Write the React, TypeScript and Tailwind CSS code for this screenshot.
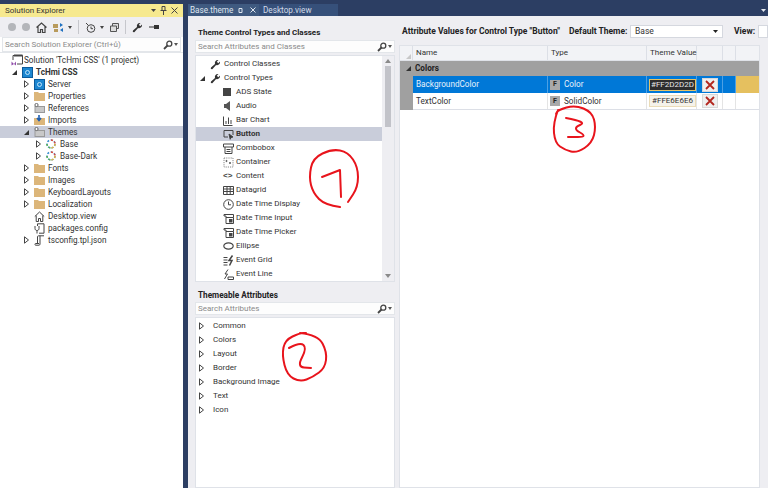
import React from "react";

const F = "font-['Roboto',sans-serif]";

const Tri = ({ open }: { open?: boolean }) =>
  open ? (
    <svg width="7" height="7" viewBox="0 0 7 7" className="shrink-0"><path d="M6 1v5H1z" fill="#333" /></svg>
  ) : (
    <svg width="7" height="8" viewBox="0 0 7 8" className="shrink-0"><path d="M1.5 .8 5.5 4 1.5 7.2z" fill="#fff" stroke="#444" strokeWidth="1" /></svg>
  );

const Folder = () => (
  <svg width="11" height="10" viewBox="0 0 11 10"><path d="M0 1h4l1 1h6v8H0z" fill="#dcb67a" /></svg>
);
const Refs = () => (
  <svg width="11" height="10" viewBox="0 0 11 10"><rect x="1" y="3.5" width="9.5" height="6" fill="#c8c8c8" stroke="#999" /><circle cx="2.5" cy="2" r="1.6" fill="#fff" stroke="#666" /></svg>
);
const Swirl = () => (
  <svg width="10" height="10" viewBox="0 0 10 10" fill="none" strokeWidth="1.5" strokeDasharray="2 1.6">
    <circle cx="5" cy="5" r="4" stroke="#3a8fd0" />
    <path d="M5 1a4 4 0 0 1 4 4" stroke="#e04a3a" />
    <path d="M1 5a4 4 0 0 0 4 4" stroke="#5aae4a" />
    <path d="M9 5a4 4 0 0 1-4 4" stroke="#e5b53a" />
  </svg>
);
const Proj = () => (
  <div className="w-[11px] h-[11px] bg-[#1c86d0] border border-[#0c5a9a] flex items-center justify-center">
    <div className="w-[5px] h-[5px] rounded-full border border-[#bfe3fa]" />
  </div>
);
const Imports = () => (
  <svg width="11" height="10" viewBox="0 0 11 10"><path d="M0 3h11v7H0z" fill="#dcb67a" /><path d="M5 0v5M3 3l2 2.5L7 3" stroke="#1f5fb0" strokeWidth="1.6" fill="none" /></svg>
);
const House = () => (
  <svg width="11" height="11" viewBox="0 0 11 11" fill="none" stroke="#444"><path d="M.8 5.5 5.5 1l4.7 4.5M2.2 4.5v6h2.3V7.5h2v3h2.3v-6" /></svg>
);
const Pkg = () => (
  <svg width="11" height="11" viewBox="0 0 11 11" fill="none" stroke="#444"><path d="M3.5 3V.8h6.5v9.4H5" /><path d="M1 3v2.5c0 1.4 1 2 2 2s2-.6 2-2V3M3 7.5v3" /></svg>
);
const Ts = () => (
  <svg width="11" height="11" viewBox="0 0 11 11" fill="none" stroke="#444"><path d="M3.5 8V1.8c0-.6.4-1 1-1H10M6 .8v8.4c0 .6-.5 1-1 1H1.5C.8 10.2.8 8.5 1.5 8.5H5" /></svg>
);
const Sol = () => (
  <svg width="12" height="12" viewBox="0 0 12 12"><path d="M2 6V1.5h9.5V10H6" fill="#fff" stroke="#444" /><path d="M3 1.5h8.5" stroke="#444" strokeWidth="2" /><path d="M.5 7.5 3 10l2-2.5v4L3 10 .5 11.5z" fill="#8e4ba8" /></svg>
);

type Row = { label: string; indent: number; arrow?: "open" | "closed"; icon: React.ReactNode; bold?: boolean; sel?: boolean; root?: boolean };
const tree: Row[] = [
  { label: "Solution 'TcHmi CSS' (1 project)", indent: 11, icon: <Sol />, root: true },
  { label: "TcHmi CSS", indent: 11, arrow: "open", icon: <Proj />, bold: true },
  { label: "Server", indent: 23, arrow: "closed", icon: <Proj /> },
  { label: "Properties", indent: 23, arrow: "closed", icon: <Folder /> },
  { label: "References", indent: 23, arrow: "closed", icon: <Refs /> },
  { label: "Imports", indent: 23, arrow: "closed", icon: <Imports /> },
  { label: "Themes", indent: 23, arrow: "open", icon: <Refs />, sel: true },
  { label: "Base", indent: 35, arrow: "closed", icon: <Swirl /> },
  { label: "Base-Dark", indent: 35, arrow: "closed", icon: <Swirl /> },
  { label: "Fonts", indent: 23, arrow: "closed", icon: <Folder /> },
  { label: "Images", indent: 23, arrow: "closed", icon: <Folder /> },
  { label: "KeyboardLayouts", indent: 23, arrow: "closed", icon: <Folder /> },
  { label: "Localization", indent: 23, arrow: "closed", icon: <Folder /> },
  { label: "Desktop.view", indent: 23, icon: <House /> },
  { label: "packages.config", indent: 23, icon: <Pkg /> },
  { label: "tsconfig.tpl.json", indent: 23, arrow: "closed", icon: <Ts /> },
];

const Wrench = () => (
  <svg width="11" height="11" viewBox="0 0 11 11"><path d="M.8 10 1 8.6 5 5C4.3 2.8 6 .6 8.5 1L6.8 2.8l1.5 1.5L10 2.6C10.5 5 8.3 6.8 6.1 6L2.3 10.3z" fill="#333" /></svg>
);
const Sq = ({ children }: { children: React.ReactNode }) => (
  <svg width="11" height="11" viewBox="0 0 11 11" fill="none" stroke="#444">{children}</svg>
);
const ctrl: { label: string; icon: React.ReactNode; bold?: boolean; sel?: boolean }[] = [
  { label: "ADS State", icon: <svg width="9" height="9"><rect width="8" height="8" fill="#444" /></svg> },
  { label: "Audio", icon: <svg width="9" height="10" viewBox="0 0 9 10"><path d="M1 3h2l4-3v10L3 7H1z" fill="#555" /></svg> },
  { label: "Bar Chart", icon: <Sq><path d="M.5 1.5v9h9M3 9V6M5.5 9V2.5M8 9V5" /></Sq> },
  { label: "Button", bold: true, sel: true, icon: <Sq><path d="M5 8H1V1.5h9V6" /><path d="M6 5l4 3-2 .5-.8 1.8z" fill="#333" /></Sq> },
  { label: "Combobox", icon: <Sq><path d="M.5 1h10v3H.5zM2 4v6.5h7V4M3.5 6.5h4M3.5 8.5h4" /></Sq> },
  { label: "Container", icon: <Sq><path d="M1 1h9v9H1z" strokeDasharray="1.2 1" stroke="#888" /><circle cx="3.5" cy="4" r=".6" /><circle cx="7" cy="6" r=".6" /></Sq> },
  { label: "Content", icon: <span className="text-[8px] leading-none font-bold text-[#444] font-['Liberation_Mono',monospace]">&lt;&gt;</span> },
  { label: "Datagrid", icon: <Sq><path d="M.5 1.5h10v8H.5zM.5 4h10M.5 6.5h10M4 1.5v8M7.2 1.5v8" /></Sq> },
  { label: "Date Time Display", icon: <Sq><circle cx="5.5" cy="5.5" r="4.8" /><path d="M5.5 2.5v3.3h2.500" /></Sq> },
  { label: "Date Time Input", icon: <Sq><path d="M1 1.5h9.5v3M1 1.5V3h2v7.5h7.5v-6H3" /><rect x="6.5" y="6.5" width="2.5" height="2.5" fill="#444" /></Sq> },
  { label: "Date Time Picker", icon: <Sq><path d="M1 1.5h9.5v3M1 1.5V3h2v7.5h7.5v-6H3" /><rect x="6.5" y="6.5" width="2.5" height="2.5" fill="#444" /></Sq> },
  { label: "Ellipse", icon: <svg width="11" height="8" viewBox="0 0 11 8"><ellipse cx="5.5" cy="4" rx="4.7" ry="3.2" fill="none" stroke="#444" strokeWidth="1.2" /></svg> },
  { label: "Event Grid", icon: <Sq><path d="M.5 2.5h4M.5 5h4M.5 7.5h4M.5 10h4" /><path d="M9.5.5 6 5.5h3L6.5 10.5" fill="none" strokeWidth="1.5" /></Sq> },
  { label: "Event Line", icon: <Sq><path d="M5 .5 2 5h2.5L1.5 10M5 8h5.5v2.5H5z" /></Sq> },
];

const attrs = ["Common", "Colors", "Layout", "Border", "Background Image", "Text", "Icon"];

const Search = ({ label, className }: { label: string; className: string }) => (
  <div className={`h-[13px] bg-[#fdfdfd] border border-[#e3e6ea] flex items-center justify-between pl-[2px] pr-[2px] ${className}`}>
    <span className="text-[8px] leading-none text-[#8a8a8a] whitespace-nowrap">{label}</span>
    <span className="flex items-center gap-[1px]">
      <svg width="10" height="10" viewBox="0 0 10 10" fill="none" stroke="#444" strokeWidth="1.3"><circle cx="6.3" cy="3.7" r="2.5" /><path d="M4.5 5.5 1 9" strokeWidth="1.8" /></svg>
      <svg width="4" height="3"><path d="M0 0h4L2 3z" fill="#555" /></svg>
    </span>
  </div>
);

const Del = () => (
  <div className="w-[16px] h-[14px] bg-[#efefef] border border-[#d8d8d8] flex items-center justify-center">
    <svg width="10" height="10" viewBox="0 0 10 10"><path d="M1 1l8 8M9 1 1 9" stroke="#b3261e" strokeWidth="1.8" /></svg>
  </div>
);

const Header = ({ w, label }: { w: string; label?: string }) => (
  <div className={`${w} h-full shrink-0 border-r border-[#dcdfe6] text-[8px] text-[#333] flex items-center pl-[3px] whitespace-nowrap`}>{label}</div>
);

const FBadge = () => (
  <span className="w-[10px] h-[10px] bg-[#a9a9a9] text-[#222] text-[7px] font-bold flex items-center justify-center">F</span>
);

function ValueRow({ name, type, value, sel }: { name: string; type: string; value: string; sel?: boolean }) {
  const cell = sel ? "border-[#4da0e4]" : "border-[#e4e4e4]";
  return (
    <div className={`flex h-[17px] text-[8.2px] ${sel ? "bg-[#0078d7] text-[#e8f2fb]" : "bg-white text-[#333] border-b border-[#dcdfe6]"}`}>
      <div className={`w-[135px] shrink-0 pl-[3px] flex items-center border-r ${cell}`}>{name}</div>
      <div className={`w-[99px] shrink-0 pl-[2px] flex items-center gap-[4px] border-r ${cell}`}><FBadge />{type}</div>
      <div className={`w-[50px] shrink-0 flex items-center pl-[2px] border-r ${cell}`}>
        <span className={`w-[47px] h-[12px] flex items-center justify-center border text-[8px] ${sel ? "bg-[#2d2d2d] text-[#e6e6e6] border-[#e5c365]" : "bg-[#f5f2ea] text-[#333] border-[#eadcb8]"}`}>{value}</span>
      </div>
      <div className={`w-[26px] shrink-0 flex items-center justify-center border-r ${cell}`}><Del /></div>
      <div className={`w-[13px] shrink-0 border-r ${cell}`} />
      <div className={`flex-1 ${sel ? "bg-[#e5c05f]" : ""}`} />
    </div>
  );
}

const smooth = (p: number[][]) => {
  let d = `M${p[0][0]} ${p[0][1]}`;
  for (let i = 1; i < p.length - 1; i++) {
    const mx = (p[i][0] + p[i + 1][0]) / 2;
    const my = (p[i][1] + p[i + 1][1]) / 2;
    d += `Q${p[i][0]} ${p[i][1]} ${mx} ${my}`;
  }
  const l = p[p.length - 1];
  return d + `L${l[0]} ${l[1]}`;
};

const marks: number[][][] = [
  [[340, 207], [325, 205], [313, 193], [309, 177], [313, 158], [332, 149], [348, 152], [358, 167], [358, 187], [348, 202]],
  [[300, 333], [318, 335], [327, 352], [325, 368], [313, 377], [300, 382], [287, 375], [282, 355], [285, 340], [300, 333], [306, 333]],
  [[558, 110], [553, 123], [555, 143], [565, 150], [577, 153], [592, 143], [596, 127], [592, 112], [575, 105], [558, 110], [556, 114]],
  [[289, 348], [300, 342], [307, 348], [297, 367], [311, 368]],
  [[566, 118], [588, 122], [572, 128], [588, 137], [568, 137]],
];

export default function App() {
  return (
    <div className={`${F} relative w-[768px] h-[488px] overflow-hidden bg-[#2c3e63] flex pt-[4px]`}>
      {/* Solution Explorer */}
      <div className="w-[183px] shrink-0 flex flex-col bg-white">
        <div className="h-[13px] bg-[#f6e98f] flex items-center justify-between px-[5px] text-[8px] text-[#333]">
          <span>Solution Explorer</span>
          <span className="flex items-center gap-[4px]">
            <svg width="5" height="3"><path d="M0 0h5L2.5 3z" fill="#444" /></svg>
            <svg width="7" height="9" viewBox="0 0 7 9" fill="none" stroke="#444"><path d="M2 .5h3v4H2zM.5 4.5h6M3.5 4.5V9" /></svg>
            <svg width="7" height="7"><path d="M.5.5l6 6M6.5.5l-6 6" stroke="#444" /></svg>
          </span>
        </div>
        <div className="h-[20px] bg-[#eeeef2] flex items-center pl-[8px] gap-[6px]">
          <span className="w-[8px] h-[8px] rounded-full bg-[#b4b6ba]" />
          <span className="w-[8px] h-[8px] rounded-full bg-[#b4b6ba]" />
          <svg width="11" height="11" viewBox="0 0 11 11" fill="none" stroke="#444" strokeWidth="1.2"><path d="M.5 5.5 5.5 1l5 4.5M2 4.5v6h2.5V7.5h2v3H9v-6" /></svg>
          <svg width="11" height="11" viewBox="0 0 11 11"><path d="M0 2h5v4H0zM1 7h4v3H1z" fill="#b89a5b" /><path d="M7 1l3 2-3 2zM10 6 7 8l3 2z" fill="#1f70c0" /></svg>
          <svg width="4" height="3" className="-ml-[2px]"><path d="M0 0h4L2 3z" fill="#444" /></svg>
          <span className="w-px h-[14px] bg-[#c6c7cc]" />
          <svg width="11" height="11" viewBox="0 0 11 11" fill="none" stroke="#444"><circle cx="6" cy="6.5" r="3.8" /><path d="M6 4.5v2.2h2M1 1l2 2" /></svg>
          <svg width="4" height="3" className="-ml-[2px]"><path d="M0 0h4L2 3z" fill="#444" /></svg>
          <svg width="9" height="9" viewBox="0 0 9 9" fill="#ddd" stroke="#555"><path d="M2.5.5h6v5h-6z" /><path d="M.5 3h6v5.5h-6z" /></svg>
          <span className="w-px h-[14px] bg-[#c6c7cc]" />
          <Wrench />
          <svg width="10" height="6"><path d="M0 3h5" stroke="#333" /><rect x="5" y="1" width="5" height="4" fill="#333" /></svg>
        </div>
        <Search label="Search Solution Explorer (Ctrl+ů)" className="mx-[2px] h-[15px]" />
        <div className="flex-1 border-t border-[#e3e6ea] pt-[1px] text-[8.2px] text-[#333]">
          {tree.map((r) => (
            <div key={r.label} className={`h-[12px] flex items-center whitespace-nowrap ${r.sel ? "bg-[#c9cdda]" : ""}`} style={{ paddingLeft: r.indent }}>
              {r.root ? null : <span className="w-[11px] shrink-0 flex justify-start">{r.arrow ? <Tri open={r.arrow === "open"} /> : null}</span>}
              <span className={`${r.root ? "w-[13px]" : "w-[14px]"} shrink-0 flex items-center`}>{r.icon}</span>
              <span className={r.bold ? "font-bold" : ""}>{r.label}</span>
            </div>
          ))}
        </div>
      </div>

      {/* Document area */}
      <div className="flex-1 ml-[5px] flex flex-col">
        <div className="h-[12px] flex items-stretch text-[8.2px] leading-[12px]">
          <div className="w-[71px] bg-[#3f5a80] text-[#dfe6ef] pl-[2px] flex items-center justify-between pr-[3px]">
            <span>Base.theme</span>
            <span className="flex items-center gap-[6px]">
              <svg width="6" height="5" fill="none" stroke="#dfe6ef"><path d="M1 .5h3v4H1z" /></svg>
              <svg width="6" height="6"><path d="M.5.5l5 5M5.5.5l-5 5" stroke="#dfe6ef" /></svg>
            </span>
          </div>
          <div className="w-[79px] bg-[#36507a] text-[#d2dbe7] pl-[4px]">Desktop.view</div>
          <div className="flex-1 flex items-center justify-end pr-[2px]">
            <svg width="5" height="3"><path d="M0 0h5L2.5 3z" fill="#e5e9f0" /></svg>
          </div>
        </div>
        <div className="flex-1 flex bg-[#eeeef2] min-h-0">
          {/* Middle column */}
          <div className="w-[207px] shrink-0 pl-[7px] flex flex-col">
            <div className="h-[24px] pl-[3px] pt-[10px] flex items-center text-[8px] font-bold text-[#222]">Theme Control Types and Classes</div>
            <Search label="Search Attributes and Classes" className="" />
            <div className="mt-[2px] h-[227px] bg-white border border-[#dfe2e8] flex text-[8px] text-[#333]">
              <div className="flex-1 overflow-hidden pt-[1px]">
                {[["Control Classes", false], ["Control Types", true]].map(([l, o]) => (
                  <div key={String(l)} className="h-[14px] flex items-center pl-[3px]">
                    <span className="w-[11px]">{o ? <Tri open /> : null}</span>
                    <span className="w-[14px] flex items-center"><Wrench /></span>
                    <span>{l}</span>
                  </div>
                ))}
                {ctrl.map((c) => (
                  <div key={c.label} className={`h-[14px] flex items-center pl-[27px] ${c.sel ? "bg-[#c9cdda]" : ""}`}>
                    <span className="w-[13px] shrink-0 flex items-center">{c.icon}</span>
                    <span className={c.bold ? "font-bold" : ""}>{c.label}</span>
                  </div>
                ))}
              </div>
              <div className="w-[12px] shrink-0 bg-[#eeeef2] flex flex-col items-center pt-[3px] pb-[3px]">
                <svg width="6" height="4"><path d="M0 4h6L3 0z" fill="#8a8a8a" /></svg>
                <div className="w-[6px] h-[61px] bg-[#c2c3c9] mt-[3px]" />
                <div className="flex-1" />
                <svg width="6" height="4"><path d="M0 0h6L3 4z" fill="#8a8a8a" /></svg>
              </div>
            </div>
            <div className="h-[20px] pl-[3px] pt-[6px] flex items-center text-[8.2px] font-bold text-[#222]">Themeable Attributes</div>
            <Search label="Search Attributes" className="" />
            <div className="mt-[2px] flex-1 bg-white border border-[#dfe2e8] pt-[1px] text-[8px] text-[#333]">
              {attrs.map((a) => (
                <div key={a} className="h-[14px] flex items-center pl-[2px]">
                  <span className="w-[15px]"><Tri /></span>
                  <span>{a}</span>
                </div>
              ))}
            </div>
          </div>

          {/* Right column */}
          <div className="flex-1 pl-[4px] flex flex-col">
            <div className="h-[29px] flex items-center text-[8.5px] font-bold text-[#222] whitespace-nowrap pl-[3px] pt-[2px]">
              <span className="w-[167px] shrink-0">Attribute Values for Control Type "Button"</span>
              <span className="w-[61px] shrink-0">Default Theme:</span>
              <div className="w-[93px] shrink-0 h-[13px] bg-white border border-[#d5d8df] flex items-center justify-between px-[4px] font-normal text-[#333]">
                <span>Base</span>
                <svg width="5" height="3"><path d="M0 0h5L2.5 3z" fill="#222" /></svg>
              </div>
              <span className="ml-[11px] w-[24px] shrink-0">View:</span>
              <div className="w-[10px] shrink-0 h-[13px] bg-white border border-[#d5d8df]" />
            </div>
            <div className="mr-[8px] flex-1 bg-white border border-[#dfe2e8] flex flex-col">
              <div className="h-[15px] bg-[#f2f3f6] border-b border-[#dfe2e8] flex items-stretch">
                <div className="w-[13px] shrink-0 border-r border-[#dcdfe6] flex items-end justify-end p-[1px]">
                  <svg width="5" height="5"><path d="M5 0v5H0z" fill="#c8c8c8" /></svg>
                </div>
                <Header w="w-[135px]" label="Name" />
                <Header w="w-[99px]" label="Type" />
                <Header w="w-[50px]" label="Theme Value" />
                <Header w="w-[26px]" />
                <Header w="w-[13px]" />
                <div className="flex-1" />
              </div>
              <div className="flex">
                <div className="w-[13px] shrink-0 bg-[#a0a0a0]" />
                <div className="flex-1">
                  <div className="h-[15px] -ml-[13px] pl-[5px] relative bg-[#a0a0a0] flex items-center text-[8.2px] font-bold text-[#222] gap-[3px]">
                    <Tri open />Colors
                  </div>
                  <ValueRow sel name="BackgroundColor" type="Color" value="#FF2D2D2D" />
                  <ValueRow name="TextColor" type="SolidColor" value="#FFE6E6E6" />
                </div>
              </div>
            </div>
          </div>
        </div>
      </div>

      {/* Hand-drawn red annotations over the screenshot */}
      <svg className="absolute inset-0 pointer-events-none" width="768" height="488" viewBox="0 0 768 488" fill="none" stroke="#e8141c" strokeWidth="2" strokeLinecap="round" strokeLinejoin="round">
        {marks.map((m, i) => (
          <path key={i} d={smooth(m)} />
        ))}
        <path d="M322 177L340 170L341 197" />
      </svg>
    </div>
  );
}
